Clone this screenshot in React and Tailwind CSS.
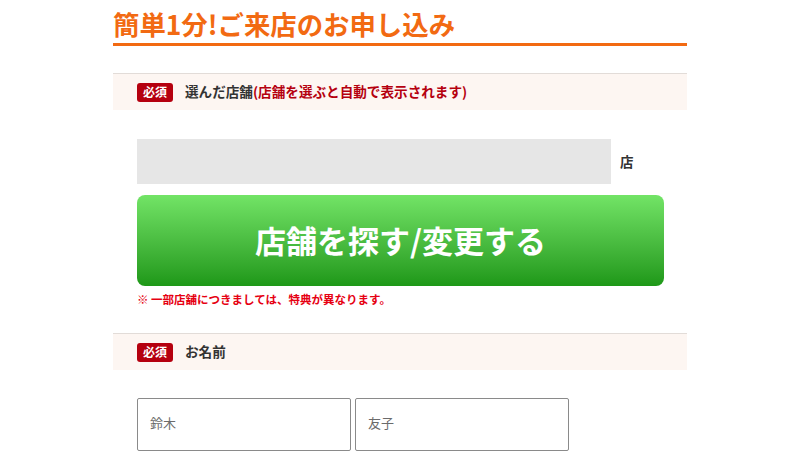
import React from "react";

const jp = { fontFamily: '"Noto Sans CJK JP", "Noto Sans", sans-serif' };

function Required() {
  return (
    <span className="inline-flex items-center justify-center w-[36px] h-[19px] rounded-[3px] bg-[#b5000f] text-white text-[12px] font-bold leading-none">
      必須
    </span>
  );
}

function SectionHead({ children }) {
  return (
    <div className="flex items-center gap-[12px] h-[37px] pl-[24px] border-t border-[#e2dcd8] bg-[#fdf6f2]">
      <Required />
      <div className="text-[13.6px] font-bold text-[#333] leading-none">{children}</div>
    </div>
  );
}

export default function App() {
  return (
    <div className="bg-white min-h-[468px] overflow-hidden" style={jp}>
      <div className="w-[574px] mx-auto">
        <h1 className="pt-[7px] pb-[2px] text-[26.4px] font-bold text-[#f26a12] leading-[34px] border-b-[3px] border-[#f26a12]">
          簡単1分!ご来店のお申し込み
        </h1>

        <div className="mt-[27px]">
          <SectionHead>
            選んだ店舗<span className="text-[#b5000f]">(店舗を選ぶと自動で表示されます)</span>
          </SectionHead>
        </div>

        <div className="pl-[24px] pt-[29px]">
          <div className="flex items-center">
            <div className="w-[474px] h-[45px] bg-[#e6e6e6]"></div>
            <span className="ml-[9px] text-[13.5px] font-bold text-[#333]">店</span>
          </div>
          <button className="mt-[11px] w-[527px] h-[91px] rounded-[8px] bg-gradient-to-b from-[#72e466] to-[#1d9817] text-white text-[31px] font-bold flex items-center justify-center">
            店舗を探す/変更する
          </button>
          <p className="mt-[6px] text-[11.5px] font-bold text-[#e60012] leading-[14px]">
            ※ 一部店舗につきましては、特典が異なります。
          </p>
        </div>

        <div className="mt-[27px]">
          <SectionHead>お名前</SectionHead>
        </div>

        <div className="pl-[24px] pt-[28px] flex gap-[4px]">
          <div className="w-[214px] h-[53px] border border-[#8a8a8a] rounded-[2px] flex items-center pl-[12px] pb-[3px] text-[13px] text-[#6b6b6b]">
            鈴木
          </div>
          <div className="w-[214px] h-[53px] border border-[#8a8a8a] rounded-[2px] flex items-center pl-[12px] pb-[3px] text-[13px] text-[#6b6b6b]">
            友子
          </div>
        </div>
      </div>
    </div>
  );
}
